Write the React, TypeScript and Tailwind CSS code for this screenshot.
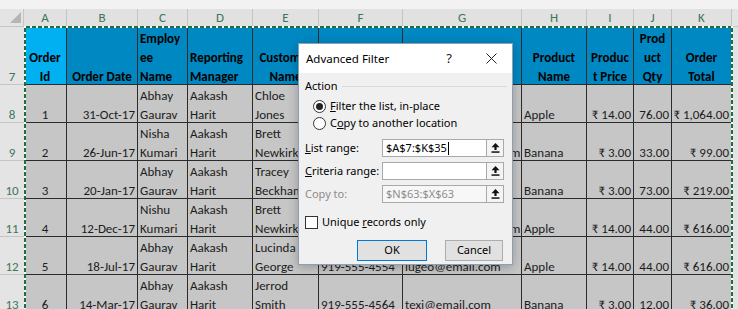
import type { ReactNode } from 'react'

type Align = 'left' | 'center' | 'right'

interface OrderRow {
  n: number
  id: string
  date: string
  emp: string[]
  mgr: string[]
  cust: string[]
  phone: string
  email: string
  prod: string
  price: string
  qty: string
  total: string
}

const letters = ['A', 'B', 'C', 'D', 'E', 'F', 'G', 'H', 'I', 'J', 'K']

const headers: { lines: string[]; align: Align }[] = [
  { lines: ['Order', 'Id'], align: 'center' },
  { lines: ['Order Date'], align: 'center' },
  { lines: ['Employ', 'ee', 'Name'], align: 'left' },
  { lines: ['Reporting', 'Manager'], align: 'left' },
  { lines: ['Customer', 'Name'], align: 'center' },
  { lines: ['Phone'], align: 'center' },
  { lines: ['Email'], align: 'center' },
  { lines: ['Product', 'Name'], align: 'center' },
  { lines: ['Produc', 't Price'], align: 'center' },
  { lines: ['Prod', 'uct', 'Qty'], align: 'center' },
  { lines: ['Order', 'Total'], align: 'center' },
]

const orders: OrderRow[] = [
  { n: 8, id: '1', date: '31-Oct-17', emp: ['Abhay', 'Gaurav'], mgr: ['Aakash', 'Harit'], cust: ['Chloe', 'Jones'], phone: '919-555-4511', email: 'chloej@email.com', prod: 'Apple', price: '₹ 14.00', qty: '76.00', total: '₹ 1,064.00' },
  { n: 9, id: '2', date: '26-Jun-17', emp: ['Nisha', 'Kumari'], mgr: ['Aakash', 'Harit'], cust: ['Brett', 'Newkirk'], phone: '919-555-4522', email: 'newkirkb@email.com', prod: 'Banana', price: '₹ 3.00', qty: '33.00', total: '₹ 99.00' },
  { n: 10, id: '3', date: '20-Jan-17', emp: ['Abhay', 'Gaurav'], mgr: ['Aakash', 'Harit'], cust: ['Tracey', 'Beckham'], phone: '919-555-4533', email: 'tbeck@email.com', prod: 'Banana', price: '₹ 3.00', qty: '73.00', total: '₹ 219.00' },
  { n: 11, id: '4', date: '12-Dec-17', emp: ['Nishu', 'Kumari'], mgr: ['Aakash', 'Harit'], cust: ['Brett', 'Newkirk'], phone: '919-555-4544', email: 'newkirkb@email.com', prod: 'Apple', price: '₹ 14.00', qty: '44.00', total: '₹ 616.00' },
  { n: 12, id: '5', date: '18-Jul-17', emp: ['Abhay', 'Gaurav'], mgr: ['Aakash', 'Harit'], cust: ['Lucinda', 'George'], phone: '919-555-4554', email: 'lugeo@email.com', prod: 'Apple', price: '₹ 14.00', qty: '44.00', total: '₹ 616.00' },
  { n: 13, id: '6', date: '14-Mar-17', emp: ['Abhay', 'Gaurav'], mgr: ['Aakash', 'Harit'], cust: ['Jerrod', 'Smith'], phone: '919-555-4564', email: 'texj@email.com', prod: 'Banana', price: '₹ 3.00', qty: '12.00', total: '₹ 36.00' },
]

const alignClass: Record<Align, string> = {
  left: 'items-start text-left',
  center: 'items-center text-center',
  right: 'items-end text-right',
}

function Cell({ lines, align, bg, bold }: { lines: string[]; align: Align; bg: string; bold?: boolean }) {
  return (
    <div
      className={`flex flex-col justify-end overflow-hidden whitespace-nowrap border-r border-b border-[#2b2b2b] px-[2px] ${bg} ${alignClass[align]} ${
        bold ? 'font-bold text-black' : 'text-[#1c1c1c]'
      }`}
    >
      {lines.map((l, i) => (
        <span key={i} className="block pt-[4px] leading-[15px]">
          {l}
        </span>
      ))}
    </div>
  )
}

function RowHead({ children }: { children: ReactNode }) {
  return (
    <div className="flex items-end justify-center border-b border-[#c4c4c4] bg-[#e4e4e4] text-[13px] text-[#3e7556]">
      <span className="block pt-[4px] leading-[15px]">{children}</span>
    </div>
  )
}

function PickerIcon() {
  return (
    <svg width="9" height="10" viewBox="0 0 9 10">
      <polygon points="4.5,0 8.5,4.2 5.6,4.2 5.6,7 3.4,7 3.4,4.2 0.5,4.2" fill="#111" />
      <rect x="0.5" y="8.3" width="8" height="1.5" fill="#111" />
    </svg>
  )
}

function RangeField({ label, value, disabled, caret }: { label: ReactNode; value: string; disabled?: boolean; caret?: boolean }) {
  return (
    <div className="flex h-[18px] items-center">
      <div className={`w-[77px] ${disabled ? 'text-[#8d8d8d]' : 'text-black'}`}>{label}</div>
      <div
        className={`flex h-full w-[105px] items-center border border-[#a9a9a9] px-[3px] ${
          disabled ? 'bg-[#f7f7f7] text-[#8d8d8d]' : 'bg-white text-black'
        }`}
      >
        {value}
        {caret && <span className="ml-[1px] h-[13px] w-px bg-black" />}
      </div>
      <div className="flex h-full w-[17px] items-center justify-center border border-l-0 border-[#a9a9a9] bg-[#f4f4f4]">
        <PickerIcon />
      </div>
    </div>
  )
}

function Radio({ checked, children }: { checked?: boolean; children: ReactNode }) {
  return (
    <div className="flex h-[17px] items-center pl-[8px]">
      <span className="flex h-[13px] w-[13px] items-center justify-center rounded-full border border-[#333] bg-white">
        {checked && <span className="h-[7px] w-[7px] rounded-full bg-[#222]" />}
      </span>
      <span className="ml-[4px] text-black">{children}</span>
    </div>
  )
}

function AdvancedFilterDialog() {
  return (
    <div className="absolute left-[298px] top-[43px] flex h-[222px] w-[215px] flex-col border border-[#8f9fb3] bg-[#f0f0f0] font-['Noto_Sans',sans-serif] text-[11px] shadow-[0_2px_10px_rgba(0,0,0,0.25)]">
      <div className="flex h-[29px] items-center bg-white pl-[7px]">
        <span className="flex-1 text-[11.5px] text-black">Advanced Filter</span>
        <span className="mr-[17px] w-[20px] text-center text-[13px] text-[#222]">?</span>
        <span className="mr-[6px] flex w-[30px] justify-center">
          <svg width="11" height="11" viewBox="0 0 11 11">
            <path d="M0.5 0.5 L10.5 10.5 M10.5 0.5 L0.5 10.5" stroke="#222" strokeWidth="1" />
          </svg>
        </span>
      </div>
      <div className="flex flex-1 flex-col pl-[6px] pr-[5px]">
        <div className="mt-[6px] flex h-[14px] items-center">
          <span className="text-black">Action</span>
          <span className="ml-[4px] h-px flex-1 bg-[#dadada]" />
        </div>
        <div className="mt-[5px]">
          <Radio checked>
            <span className="underline">F</span>ilter the list, in-place
          </Radio>
        </div>
        <Radio>
          C<span className="underline">o</span>py to another location
        </Radio>
        <div className="mt-[7px] flex flex-col gap-[5px]">
          <RangeField
            label={
              <>
                <span className="underline">L</span>ist range:
              </>
            }
            value="$A$7:$K$35"
            caret
          />
          <RangeField
            label={
              <>
                <span className="underline">C</span>riteria range:
              </>
            }
            value=""
          />
          <RangeField label="Copy to:" value="$N$63:$X$63" disabled />
        </div>
        <div className="mt-[12px] flex h-[14px] items-center">
          <span className="h-[13px] w-[13px] border border-[#333] bg-white" />
          <span className="ml-[4px] text-black">
            Unique <span className="underline">r</span>ecords only
          </span>
        </div>
        <div className="mt-[11px] flex">
          <button className="ml-[52px] h-[21px] w-[70px] border border-[#0078d7] bg-[#e1e1e1] text-black">OK</button>
          <button className="ml-[18px] h-[21px] w-[58px] border border-[#adadad] bg-[#e1e1e1] text-black">Cancel</button>
        </div>
      </div>
    </div>
  )
}

export default function App() {
  return (
    <div className="relative h-[309px] w-[738px] overflow-hidden bg-[#e3e3e3] font-[Calibri,Carlito,Lato,sans-serif] text-[13px]">
      <div className="h-[9px] bg-[#f2f2f2]" />
      <div className="relative grid grid-cols-[24px_43px_71px_50px_65px_66px_84px_119px_65px_47px_38px_60px_1fr] grid-rows-[18px_58px_38px_38px_38px_38px_38px_38px]">
        <div className="relative border-r border-b border-[#c4c4c4] bg-[#e4e4e4]">
          <svg className="absolute bottom-[3px] right-[2px]" width="11" height="11" viewBox="0 0 11 11">
            <polygon points="11,0 11,11 0,11" fill="#b5b5b5" />
          </svg>
        </div>
        {letters.map((l) => (
          <div
            key={l}
            className="flex items-center justify-center border-r border-b border-[#c4c4c4] bg-[#e1e1e1] text-[13px] text-[#3e7556]"
          >
            {l}
          </div>
        ))}
        <div className="border-b border-[#c4c4c4] bg-[#e4e4e4]" />

        <RowHead>7</RowHead>
        {headers.map((h, i) => (
          <Cell key={i} lines={h.lines} align={h.align} bg={i === 0 ? 'bg-[#00b0f0]' : 'bg-[#0088c2]'} bold />
        ))}
        <div />

        {orders.map((o) => (
          <div key={o.n} className="contents">
            <RowHead>{o.n}</RowHead>
            <Cell lines={[o.id]} align="center" bg="bg-[#c6c6c6]" />
            <Cell lines={[o.date]} align="right" bg="bg-[#c6c6c6]" />
            <Cell lines={o.emp} align="left" bg="bg-[#c6c6c6]" />
            <Cell lines={o.mgr} align="left" bg="bg-[#c6c6c6]" />
            <Cell lines={o.cust} align="left" bg="bg-[#c6c6c6]" />
            <Cell lines={[o.phone]} align="left" bg="bg-[#c6c6c6]" />
            <Cell lines={[o.email]} align="left" bg="bg-[#c6c6c6]" />
            <Cell lines={[o.prod]} align="left" bg="bg-[#c6c6c6]" />
            <Cell lines={[o.price]} align="right" bg="bg-[#c6c6c6]" />
            <Cell lines={[o.qty]} align="right" bg="bg-[#c6c6c6]" />
            <Cell lines={[o.total]} align="right" bg="bg-[#c6c6c6]" />
            <div />
          </div>
        ))}

        {/* copy marquee around the selection */}
        <div className="pointer-events-none absolute bottom-0 left-[24px] top-[17px] w-[709px]">
          <div className="absolute left-0 right-0 top-0 h-[2px] bg-[repeating-linear-gradient(90deg,#ffffff_0px,#ffffff_2px,#1e6e42_2px,#1e6e42_6px)]" />
          <div className="absolute bottom-0 left-0 top-0 w-[2px] bg-[repeating-linear-gradient(180deg,#ffffff_0px,#ffffff_2px,#1e6e42_2px,#1e6e42_6px)]" />
          <div className="absolute bottom-0 right-0 top-0 w-[2px] bg-[repeating-linear-gradient(180deg,#ffffff_0px,#ffffff_2px,#1e6e42_2px,#1e6e42_6px)]" />
        </div>
      </div>

      <AdvancedFilterDialog />
    </div>
  )
}
